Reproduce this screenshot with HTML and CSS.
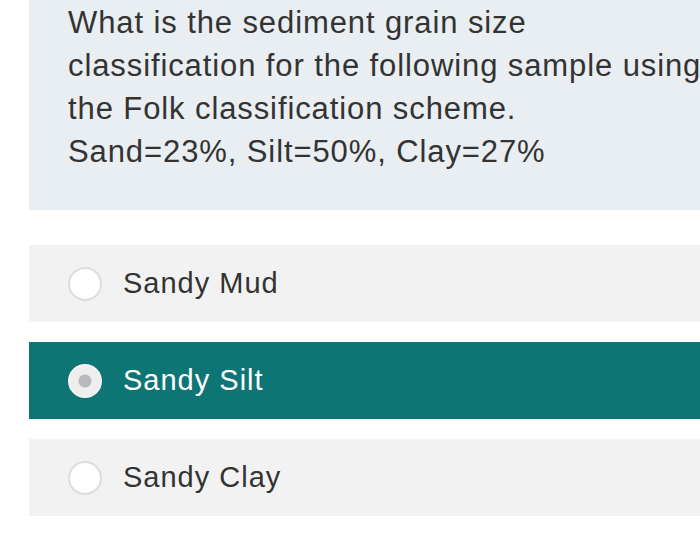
FILE: index.html
```html
<!DOCTYPE html>
<html lang="en">
<head>
  <meta charset="UTF-8">
  <title>Folk classification question</title>
  <link rel="stylesheet" href="styles.css">
</head>
<body>

<div class="quiz">
  <div class="question">
    <p>What is the sediment grain size<br>
    classification for the following sample using<br>
    the Folk classification scheme.<br>
    Sand=23%, Silt=50%, Clay=27%</p>
  </div>

  <div class="options">
    <label class="option">
      <span class="radio"></span>
      <span class="label">Sandy Mud</span>
    </label>
    <label class="option selected">
      <span class="radio"></span>
      <span class="label">Sandy Silt</span>
    </label>
    <label class="option">
      <span class="radio"></span>
      <span class="label">Sandy Clay</span>
    </label>
  </div>
</div>

</body>
</html>
```

FILE: styles.css
```css
body {
  font-family: "Liberation Sans", Arial, sans-serif;
  background-color: #fff;
  color: #333;
  margin: 0;
  padding: 0;
  overflow: hidden;
}
.quiz {
  margin-left: 29px;
  width: 700px;
}
.question {
  background-color: #e8eef1;
  padding: 0 0 0 39px;
  height: 210px;
  box-sizing: border-box;
}
.question p {
  margin: 0;
  padding-top: 1px;
  font-size: 31px;
  letter-spacing: 0.9px;
  line-height: 43px;
  color: #333;
  white-space: nowrap;
}
.options {
  display: flex;
  flex-direction: column;
  gap: 20px;
  margin-top: 35px;
}
.option {
  display: flex;
  align-items: center;
  height: 77px;
  background-color: #f2f2f2;
  padding-left: 39px;
}
.option .radio {
  width: 30px;
  height: 30px;
  border: 2px solid #ddd;
  border-radius: 50%;
  background: white;
  flex-shrink: 0;
}
.option .label {
  margin-left: 21px;
  font-size: 29px;
  letter-spacing: 1px;
  color: #333;
}
.option.selected {
  background-color: #0e7575;
}
.option.selected .label {
  color: #fff;
}
.option.selected .radio {
  border-color: #f2f2f2;
  background: radial-gradient(circle, #b9b9bd 0 6px, #eee 7px);
}
```
